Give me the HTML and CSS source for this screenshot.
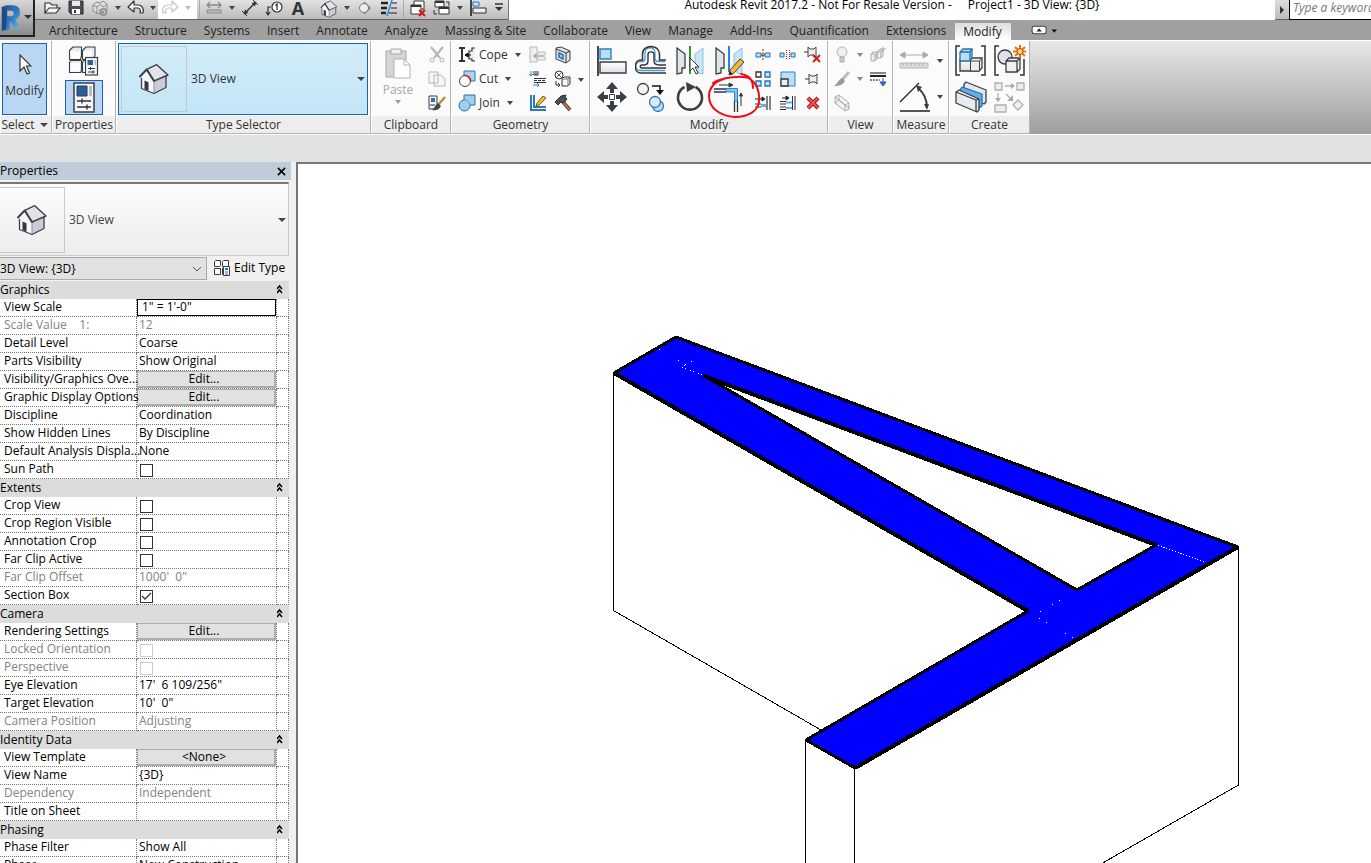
FILE: index.html
```html
<!DOCTYPE html>
<html lang="en">
<head>
    <meta charset="UTF-8">
    <meta name="viewport" content="width=device-width, initial-scale=1.0">
    <title>Autodesk Revit 2017.2 - Project1 - 3D View: {3D}</title>
    <link rel="stylesheet" href="styles.css">
</head>
<body>
    <!-- shared icons -->
    <svg class="defs" aria-hidden="true">
        <defs>
            <linearGradient id="rGrad" x1="0" y1="0" x2="1" y2="1">
                <stop offset="0" stop-color="#1d4f8f"/>
                <stop offset=".5" stop-color="#2f76bd"/>
                <stop offset="1" stop-color="#6cc0e8"/>
            </linearGradient>
            <linearGradient id="sheet" x1="0" y1="0" x2="0" y2="1">
                <stop offset="0" stop-color="#ffffff"/>
                <stop offset="1" stop-color="#dcdfe3"/>
            </linearGradient>
        </defs>
        <symbol id="house" viewBox="0 0 32 32">
            <path d="M3.500 13l5-6L16 18v12.500l-12.500-5z" fill="#f6f7f9"/>
            <path d="M16 18l12-6v12.500l-12 6z" fill="#c9ccd8"/>
            <path d="M3.500 15v10.500l12.500 5 12-6V13" fill="none" stroke="#3c4048" stroke-width="1.300" stroke-linejoin="round"/>
            <path d="M16 19v11" stroke="#8d919c"/>
            <path d="M8.700 6.300l10-4.600L30 12l-14 6z" fill="#e1e3e8" stroke="#3c4048" stroke-width="1.400" stroke-linejoin="round"/>
            <path d="M2 13.500l6.700-7L16 18" fill="none" stroke="#3c4048" stroke-width="2" stroke-linejoin="round" stroke-linecap="round"/>
            <path d="M6.500 17.500l4 1.800v8.500l-4-1.800z" fill="#34383e"/>
        </symbol>
        <symbol id="cubes" viewBox="0 0 32 32">
            <g fill="#e9ebee" stroke="#3a3e45" stroke-width="1.100" stroke-linejoin="round">
                <path d="M1.500 13.500v-9L5 1h8.500v9l-1 3.500zM14.500 13.500v-9L18 1h9v9l-3 3.500z"/>
                <path d="M1.500 26.500v-10l1-2h11v10l-1 2zM14.500 26.500v-10l1-2H27v12z"/>
            </g>
            <path d="M2.500 5h9.500v7.500H2.500zM15.500 5H24v7.500h-8.500zM2.500 17H12v8.500H2.500zM15.500 17H19v8.500h-3.500z" fill="#fdfdfd"/>
            <rect x="17.500" y="11.500" width="12" height="17.500" fill="#f5f6f7" stroke="#3a3e45" stroke-width="1.200"/>
            <path d="M19.500 14h5.500v5h-5.500z" fill="#2e6096"/>
            <path d="M26.500 14h1.500v5h-1.500z" fill="#b5b9be"/>
            <path d="M20 22.500h7M20 26h7M22.500 21v3M25 24.500v3" stroke="#3a3e45"/>
        </symbol>
    </svg>

    <header class="titlebar">
        <nav class="qat" aria-label="Quick Access">
            <button class="ico" aria-label="Open"><svg viewBox="0 0 18 18"><path d="M2 13V3h5l2 2h5v3M2 13l4-5h11l-4 5z" fill="#f6f6f6" stroke="#333" stroke-width="1.200"/></svg></button>
            <button class="ico" aria-label="Save"><svg viewBox="0 0 18 18"><path d="M2 1h14v13H4l-2-2z" fill="#4a4e55" stroke="#26292e"/><path d="M5 1h8v5H5z" fill="#e8eaec"/><path d="M5 9h8v5H5z" fill="#fff"/><path d="M7 10h2v3H7z" fill="#333"/></svg></button>
            <button class="ico" aria-label="Synchronize"><svg viewBox="0 0 18 18"><path d="M2 5l4-3 3 1 3-2 4 3v6l-4 3-4 1-6-3zM2 5l4 2v7M6 7l3-3M9 5l4 2 3-3M9 9v5" fill="#dcdcdc" stroke="#8b8b8b"/><circle cx="12.500" cy="12" r="4" fill="#969696"/><path d="M11 10l3 1-1 3" fill="none" stroke="#ccc"/></svg></button>
            <button class="drop" aria-label="Synchronize options"></button>
            <button class="ico" aria-label="Undo"><svg viewBox="0 0 18 18"><path d="M1 7l6-6v4h4c4 0 6 3 5 8h-3c1-3 0-5-2-5H7v4z" fill="#f4f4f4" stroke="#333" stroke-width="1.200" stroke-linejoin="round"/></svg></button>
            <button class="drop narrow" aria-label="Undo list"></button>
            <span class="qat-off">
                <button class="ico" aria-label="Redo" disabled><svg viewBox="0 0 18 18"><path d="M17 7l-6-6v4H7c-4 0-6 3-5 8h3c-1-3 0-5 2-5h4v4z" fill="#fff" stroke="#c6c6c6" stroke-width="1.200" stroke-linejoin="round"/></svg></button>
                <button class="drop" aria-label="Redo list" disabled></button>
            </span>
            <i class="sep"></i>
            <button class="ico" aria-label="Measure"><svg viewBox="0 0 18 18"><path d="M2 5h14M5 2L2 5l3 3M13 2l3 3-3 3" fill="none" stroke="#888" stroke-width="1.300"/><path d="M2 10h14v3H2z" fill="#bbb" stroke="#888"/></svg></button>
            <button class="drop" aria-label="Measure options"></button>
            <button class="ico" aria-label="Aligned Dimension"><svg viewBox="0 0 18 18"><path d="M4 13L14 3" stroke="#333" stroke-width="1.400"/><path d="M2.500 14.500l1.500-5 3.500 3.500zM15.500 1.500l-1.500 5L10.500 3z" fill="#333"/><path d="M1 11l5 5M12 0l5 5" stroke="#333"/></svg></button>
            <button class="ico" aria-label="Tag by Category"><svg viewBox="0 0 18 18"><path d="M6 7H3v7M1 12l2 3 2-3" fill="none" stroke="#333" stroke-width="1.200"/><circle cx="12" cy="7" r="5" fill="#fff" stroke="#333" stroke-width="1.200"/><path d="M10.500 5.500L12 4v6" fill="none" stroke="#333" stroke-width="1.300"/></svg></button>
            <button class="ico letter" aria-label="Text">A</button>
            <i class="space"></i>
            <button class="ico" aria-label="Default 3D View"><svg viewBox="0 0 32 32"><use href="#house"/></svg></button>
            <button class="drop" aria-label="3D view options"></button>
            <button class="ico" aria-label="Section"><svg viewBox="0 0 18 18"><path d="M8 1l7 7-7 7z" fill="#888"/><circle cx="8" cy="8" r="4.500" fill="#eee" stroke="#777"/></svg></button>
            <button class="ico" aria-label="Thin Lines"><svg viewBox="0 0 18 18"><path d="M1 3h7M1 8h6M1 13h5" stroke="#222" stroke-width="2.400"/><path d="M12 3h5M11 8h6M9 13h8" stroke="#222"/><path d="M12 0L7 16" stroke="#2f8be0" stroke-width="1.500"/></svg></button>
            <i class="sep"></i>
            <button class="ico" aria-label="Close Hidden Windows"><svg viewBox="0 0 18 18"><path d="M5 1h10v8H5z" fill="#fff" stroke="#333"/><path d="M2 5h10v9H2z" fill="#fff" stroke="#333"/><path d="M2 6h10" stroke="#333" stroke-width="2"/><path d="M10 10l6 6M16 10l-6 6" stroke="#d11717" stroke-width="2"/></svg></button>
            <button class="ico" aria-label="Switch Windows"><svg viewBox="0 0 18 18"><path d="M2 1h9v6H2zM6 7h10v7H6z" fill="#fff" stroke="#333"/><path d="M2 2h9M6 8h10" stroke="#333" stroke-width="2"/><path d="M13 2h3v4M1 10v4h3" fill="none" stroke="#333"/></svg></button>
            <button class="drop" aria-label="Switch Windows list"></button>
            <button class="ico" aria-label="Align"><svg viewBox="0 0 18 18"><path d="M2 0v16" stroke="#111" stroke-width="1.500"/><path d="M4 2h6v4H4z" fill="#cfe6f8" stroke="#2172b8"/><path d="M4 8h13v5H4z" fill="#eee" stroke="#333"/></svg></button>
            <button class="more" aria-label="Customize Quick Access Toolbar"><svg viewBox="0 0 10 10"><path d="M1 1h8" stroke="#333" stroke-width="1.500"/><path d="M1 4h8L5 8z" fill="#333"/></svg></button>
        </nav>
        <div class="caption">
            <span>Autodesk Revit 2017.2 - Not For Resale Version -</span>
            <span>Project1 - 3D View: {3D}</span>
        </div>
        <div class="search">
            <button class="search-toggle" aria-label="Toggle search"></button>
            <input type="text" aria-label="Search" placeholder="Type a keyword or phrase">
        </div>
        <button class="app-menu" aria-label="Application menu">
            <svg viewBox="0 0 24 32"><path d="M2 4l5-2h6c6 0 9 3 9 8 0 4-2 6-5 8l5 10h-6l-5-9v9l-4 2H2zM8 8v6h4c2 0 3-1 3-3s-1-3-3-3z" fill="url(#rGrad)" fill-rule="evenodd"/><path d="M2 4l5 3v21l-5 2z" fill="#1c4a86"/></svg>
        </button>
    </header>

    <nav class="tabs">
        <a href="#">Architecture</a>
        <a href="#">Structure</a>
        <a href="#">Systems</a>
        <a href="#">Insert</a>
        <a href="#">Annotate</a>
        <a href="#">Analyze</a>
        <a href="#">Massing &amp; Site</a>
        <a href="#">Collaborate</a>
        <a href="#">View</a>
        <a href="#">Manage</a>
        <a href="#">Add-Ins</a>
        <a href="#">Quantification</a>
        <a href="#">Extensions</a>
        <a href="#" class="active">Modify</a>
        <button class="minimize" aria-label="Minimize ribbon"><svg viewBox="0 0 24 10"><rect x="1" y="1" width="13" height="7" rx="2" fill="#fff" stroke="#3d4652"/><path d="M5 6l2.500-3L10 6z" fill="#222"/><path d="M19 4h5l-2.500 3z" fill="#111"/></svg></button>
    </nav>

    <section class="ribbon">
        <div class="panel p-select">
            <div class="panel-body">
                <button class="modify-btn">
                    <svg viewBox="0 0 14 22"><path d="M2 1v16l4-4 3 7 2.500-1-3-7h4.500z" fill="#fff" stroke="#333" stroke-width="1.200"/></svg>
                    Modify
                </button>
            </div>
            <button class="panel-title">Select <i class="caret"></i></button>
        </div>

        <div class="panel p-props">
            <div class="panel-body stack">
                <button class="props-btn" aria-label="Type Properties"><svg viewBox="0 0 32 32"><use href="#cubes"/></svg></button>
                <button class="props-btn on" aria-label="Properties palette"><svg viewBox="0 0 32 32"><path d="M6 1h20v29H6z" fill="#f4f5f6" stroke="#3a3e45" stroke-width="1.500"/><path d="M9 4h10v10H9z" fill="#2d5f96" stroke="#1d3f6b"/><path d="M21 4h3v10h-3z" fill="#b9bdc3"/><path d="M9 19h14M9 25h14M14 16.500v5M19 22.500v5" stroke="#333" stroke-width="1.400"/></svg></button>
            </div>
            <div class="panel-title">Properties</div>
        </div>

        <div class="panel p-type">
            <div class="panel-body">
                <button class="type-btn">
                    <span class="thumb"><svg viewBox="0 0 32 32"><use href="#house"/></svg></span>
                    <span class="grow">3D View</span>
                    <i class="caret"></i>
                </button>
            </div>
            <div class="panel-title">Type Selector</div>
        </div>

        <div class="panel p-clip">
            <div class="panel-body">
                <button class="paste" disabled>
                    <svg viewBox="0 0 28 32"><path d="M2 3h20v26H2z" fill="#d5d5d5" stroke="#a9a9a9"/><path d="M7 1h10v5H7z" fill="#eee" stroke="#a9a9a9"/><path d="M10 11h10l6 6v13H10z" fill="#fff" stroke="#b2b2b2"/><path d="M20 11v6h6" fill="none" stroke="#b2b2b2"/></svg>
                    Paste
                    <i class="caret"></i>
                </button>
                <div class="small-grid one">
                    <button aria-label="Cut to clipboard" disabled><svg viewBox="0 0 18 18"><path d="M3 1l9 11M15 1L6 12" stroke="#b5b5b5" stroke-width="2"/><circle cx="4" cy="14" r="2" fill="none" stroke="#b5b5b5"/><circle cx="14" cy="14" r="2" fill="none" stroke="#b5b5b5"/></svg></button>
                    <button aria-label="Copy to clipboard" disabled><svg viewBox="0 0 18 18"><path d="M1 2h9v11H1zM6 5h7l4 4v7H6z" fill="#f7f7f7" stroke="#b5b5b5"/></svg></button>
                    <button aria-label="Match type"><svg viewBox="0 0 18 18"><path d="M1 2h8v13H1z" fill="#f4f5f6" stroke="#3a3e45"/><path d="M3 4h4v4H3z" fill="#2d6fb3"/><path d="M2 11h5" stroke="#333"/><path d="M17 3l-7 8" stroke="#c08a2d" stroke-width="2.400"/><path d="M10 9l3 3c-2 4-5 5-9 4 3-2 3-5 6-7z" fill="#444"/></svg></button>
                </div>
            </div>
            <div class="panel-title">Clipboard</div>
        </div>

        <div class="panel p-geom">
            <div class="panel-body geom">
                <div class="labelled">
                    <button><svg viewBox="0 0 18 18"><path d="M1 2h6M1 15h6M4 2v13" stroke="#333" stroke-width="2"/><path d="M17 2h-3v3h-3v8h3v2h3" fill="#eef1f4" stroke="#333" stroke-width="1.200"/><path d="M7 9h6M7 9l3-2v4z" stroke="#111" fill="#111"/></svg>Cope <i class="caret"></i></button>
                    <button><svg viewBox="0 0 18 18"><path d="M6 1h11v10H6z" fill="#a9d3ee" stroke="#2a78b4"/><circle cx="7" cy="11" r="5.500" fill="#fff" stroke="#444"/><path d="M7 5.500a5.500 5.500 0 0 1 5.500 5.500" fill="none" stroke="#e11" stroke-width="1.500"/></svg>Cut <i class="caret"></i></button>
                    <button><svg viewBox="0 0 18 18"><path d="M6 1h11v10h-5a5.500 5.500 0 1 1-6-5z" fill="#a3cdeb" stroke="#2470ab"/><path d="M12 11a5.500 5.500 0 0 0-6-5" fill="none" stroke="#5e9cc9"/></svg>Join <i class="caret"></i></button>
                </div>
                <div class="small-grid two">
                    <button aria-label="Wall joins" disabled><svg viewBox="0 0 18 18"><path d="M1 1h7v5h8v8H8v2H1z" fill="#eee" stroke="#b8b8b8"/><path d="M15 10H6M9 7l-4 3 4 3" fill="none" stroke="#aaa" stroke-width="1.500"/></svg></button>
                    <button aria-label="Split face"><svg viewBox="0 0 18 18"><path d="M2 2l5-1 9 4v9l-4 3-10-4z" fill="#dfe3e8" stroke="#3a3e45"/><path d="M12 7v10M12 7l4-2M2 3l10 4" stroke="#3a3e45"/><path d="M5 7l4 2v4l-4-2z" fill="#b7dcf5" stroke="#2172b8" stroke-width="1.500"/></svg></button>
                    <button aria-label="Beam joins"><svg viewBox="0 0 18 18"><path d="M2 1v5M0 4l2 2 2-2M4 15h6M8 13l2 2-2 2" stroke="#2b83cf" fill="none"/><path d="M5 1v4h4V1M7 1v4" fill="none" stroke="#333"/><path d="M5 8.500h12M5 12.500h12" stroke="#333"/><path d="M5 10.500h12" stroke="#333" stroke-dasharray="3 1"/></svg></button>
                    <button aria-label="Demolish"><svg viewBox="0 0 18 18"><circle cx="5" cy="5" r="4" fill="#fff" stroke="#333"/><path d="M2 2l6 6M8 2L2 8" stroke="#555"/><path d="M2 11v4h4M4 13l2 2-2 2" fill="none" stroke="#333"/><path d="M8 9l2-2h6v7l-2 2H8z" fill="#fafafa" stroke="#333"/><path d="M8 9h6v7M14 9l2-2" fill="none" stroke="#777"/></svg></button>
                    <button aria-label="Paint"><svg viewBox="0 0 18 18"><path d="M2 1v15h15M5 1v12h12" fill="none" stroke="#2b78bd" stroke-width="2"/><path d="M7 12l1-3 6-7 3 2-7 7z" fill="#f1c232" stroke="#77561b"/></svg></button>
                    <button aria-label="Hammer"><svg viewBox="0 0 18 18"><path d="M1 8l6-6 5-1-1 2 2 2-4 5-2-2-3 3z" fill="#4b5058" stroke="#2c3036"/><path d="M9 8l7 8" stroke="#5e3a2a" stroke-width="3.500"/><path d="M10 9l6 7" stroke="#c08468" stroke-width="1.500"/></svg></button>
                </div>
                <button class="drop" aria-label="More geometry tools"></button>
            </div>
            <div class="panel-title">Geometry</div>
        </div>

        <div class="panel p-modify">
            <div class="panel-body">
                <div class="big-grid">
                    <button aria-label="Align"><svg viewBox="0 0 32 32"><path d="M2 1v30" stroke="#111" stroke-width="1.500"/><path d="M4 4h11v10H4z" fill="#b9def5" stroke="#2b83b8" stroke-width="1.400"/><path d="M4 17h26v11H4z" fill="url(#sheet)" stroke="#3a3e45" stroke-width="1.400"/></svg></button>
                    <button aria-label="Offset"><svg viewBox="0 0 32 32"><path d="M31 26.500H7c-7 0-7-9 0-9h1.500c2 0 2.500-1 2.500-3V9c0-7 10-7 10 0v5.500c0 2 1 3 3 3h7" fill="none" stroke="#4a9bd0" stroke-width="1.300" transform="translate(-1 -1)"/><path d="M31 23H7c-2.500 0-2.500-3 0-3h2c3 0 4-2 4-4.500V9.500c0-3.500 6-3.500 6 0v6c0 3 2 4.500 5 4.500h7" fill="none" stroke="#30353c" stroke-width="1.400"/><path d="M31 28H6c-7.500 0-7.500-13 0-13h1.500V9C7.500-1 24.500-1 24.500 9v6H31" fill="none" stroke="#30353c" stroke-width="1.500"/></svg></button>
                    <button aria-label="Mirror - Pick Axis"><svg viewBox="0 0 32 32"><path d="M3 3l8 6v14H8v5l-5 1z" fill="#e2e4e8" stroke="#3a3e45" stroke-width="1.300"/><path d="M29 3l-8 6v14h3v5l5 1z" fill="#c9e6f7" stroke="#8fbfdd"/><path d="M16 1v28" stroke="#2f9b2f" stroke-width="2"/><path d="M16 13v13l3-3 3 6 2-1-3-6h4z" fill="#fff" stroke="#333"/></svg></button>
                    <button aria-label="Mirror - Draw Axis"><svg viewBox="0 0 32 32"><path d="M3 3l8 6v14H8v5l-5 1z" fill="#e2e4e8" stroke="#3a3e45" stroke-width="1.300"/><path d="M29 3l-8 6v14h3v5l5 1z" fill="#c9e6f7" stroke="#8fbfdd"/><path d="M16 1v26" stroke="#2b83e0" stroke-width="2"/><path d="M16 30l1-5L27 14l4 3-11 12z" fill="#f4b94a" stroke="#5a3a1b"/><path d="M16 30l1-4 2.500 3z" fill="#222"/></svg></button>
                    <button aria-label="Move"><svg viewBox="0 0 32 32"><path d="M16 1l6 7h-4v4h-4V8h-4zM16 31l-6-7h4v-4h4v4h4zM1 16l7-6v4h4v4H8v4zM31 16l-7 6v-4h-4v-4h4v-4z" fill="#3a3e45"/><path d="M13.500 13.500h5v5h-5z" fill="#fff" stroke="#3a3e45"/></svg></button>
                    <button aria-label="Copy"><svg viewBox="0 0 32 32"><circle cx="8" cy="8" r="5.500" fill="#f4f4f4" stroke="#3a3e45" stroke-width="1.300"/><path d="M17 5h8v7" fill="none" stroke="#111" stroke-width="1.500"/><path d="M21 9l4 5 4-5z" fill="#111"/><circle cx="23" cy="25" r="5.500" fill="#b9def5" stroke="#2b78b4" stroke-width="1.300"/><circle cx="20" cy="21" r="5.500" fill="#d7ecfa" stroke="#2b78b4" stroke-width="1.300"/></svg></button>
                    <button aria-label="Rotate"><svg viewBox="0 0 32 32"><path d="M21.500 6a12 12 0 1 1-11 0" fill="none" stroke="#3a3e45" stroke-width="2.600"/><path d="M12 1l10 5-9 5z" fill="#3a3e45"/></svg></button>
                    <button aria-label="Trim/Extend to Corner"><svg viewBox="0 0 32 32"><path d="M6 4h12M16 2l4 2-4 2z" stroke="#30353c" fill="#30353c"/><path d="M1 8h12M1 11h12M21.500 20v11M24.500 20v11" stroke="#30353c" stroke-width="1.300"/><path d="M13 7.500h11.500V20h-3v-9H13z" fill="#7fc3f2" stroke="#2b83cf"/><path d="M28 25V13M26.500 15l1.500-3 1.500 3z" stroke="#30353c" fill="#30353c"/></svg></button>
                </div>
                <div class="small-grid three">
                    <button aria-label="Split Element"><svg viewBox="0 0 18 18"><path d="M2 7h5v4H2zM11 7h5v4h-5z" fill="#b9def5" stroke="#2470ab"/><path d="M9 3v12" stroke="#c11" stroke-dasharray="2 1"/><path d="M7 9h4" stroke="#333"/></svg></button>
                    <button aria-label="Split with Gap"><svg viewBox="0 0 18 18"><path d="M1 7h4v4H1zM12 7h4v4h-4z" fill="#b9def5" stroke="#2470ab"/><path d="M7.500 4v10M10.500 4v10" stroke="#c11" stroke-dasharray="1 1"/></svg></button>
                    <button aria-label="Unpin"><svg viewBox="0 0 18 18"><path d="M0 6h4" stroke="#333"/><path d="M4 1v10l2-2h4l2 2V1l-2 2H6z" fill="#eee" stroke="#444"/><path d="M9 9l7 7M16 9l-7 7" stroke="#d11c1c" stroke-width="2"/></svg></button>
                    <button aria-label="Array"><svg viewBox="0 0 18 18"><path d="M2 2h5v5H2z" fill="#fff" stroke="#333" stroke-width="1.300"/><path d="M11 2h5v5h-5zM2 11h5v5H2zM11 11h5v5h-5z" fill="#c9e6f7" stroke="#2172b8" stroke-width="1.300"/></svg></button>
                    <button aria-label="Scale"><svg viewBox="0 0 18 18"><path d="M2 2h14v14H2z" fill="#b9def5" stroke="#2b83b8"/><path d="M2 9h7v7H2z" fill="#eee" stroke="#333" stroke-width="1.300"/></svg></button>
                    <button aria-label="Pin"><svg viewBox="0 0 18 18"><path d="M1 9h4" stroke="#333"/><path d="M5 4v10l2-2h4l2 2V4l-2 2H7z" fill="#eee" stroke="#444"/></svg></button>
                    <button aria-label="Trim/Extend Single"><svg viewBox="0 0 18 18"><path d="M1 5h9M8 3l3 2-3 2z" stroke="#222" fill="#222"/><path d="M1 10h6M1 13h6M13 2v14M16 2v14" stroke="#333" stroke-width="1.200"/><path d="M7 10h5v3H7z" fill="#5db1ef"/></svg></button>
                    <button aria-label="Trim/Extend Multiple"><svg viewBox="0 0 18 18"><path d="M3 4h5M7 2l3 2-3 2z" stroke="#222" fill="#222"/><path d="M1 7.500h6M1 10h6M1 13h6M1 15.500h6M13.500 2v14M16 2v14" stroke="#333"/><path d="M7 8.500h6M7 14h6" stroke="#5db1ef" stroke-width="2"/></svg></button>
                    <button aria-label="Delete"><svg viewBox="0 0 18 18"><path d="M4 4l10 10M14 4L4 14" stroke="#8f1616" stroke-width="4"/><path d="M4 4l10 10M14 4L4 14" stroke="#ee5050" stroke-width="2.400"/></svg></button>
                </div>
                <svg class="markup" viewBox="0 0 56 46" aria-hidden="true"><path d="M33 1c7 1 12 5 12 14M5 10C14 4 36 2 42 6c7 4 10 14 9 23-1 9-11 15-24 15C13 43 1 36 1 23 1 15 7 8 16 6" fill="none" stroke="#f00a12" stroke-width="2" stroke-linecap="round"/></svg>
            </div>
            <div class="panel-title">Modify</div>
        </div>

        <div class="panel p-view">
            <div class="panel-body">
                <div class="view-grid">
                    <button aria-label="Hide" disabled><svg viewBox="0 0 18 18"><circle cx="9" cy="6" r="5" fill="#eee" stroke="#b5b5b5"/><path d="M7 11h4v5H7z" fill="#ccc" stroke="#aaa"/></svg></button>
                    <button class="drop" aria-label="Hide options"></button>
                    <button aria-label="Displace Elements" disabled><svg viewBox="0 0 18 18"><path d="M2 8l2-2h4v7l-2 2H2zM2 8h4v7M8 6l2-2h4v6l-2 2H8zM8 6h4v6M12 6l2-2" fill="#eee" stroke="#aaa"/><path d="M14 1v5M11 3h6" stroke="#aaa"/></svg></button>
                    <button aria-label="Override Graphics" disabled><svg viewBox="0 0 18 18"><path d="M16 2l-7 8" stroke="#bbb" stroke-width="3"/><path d="M9 8l3 3c-2 4-6 5-11 5 4-3 4-6 8-8z" fill="#999"/></svg></button>
                    <button class="drop" aria-label="Override options"></button>
                    <button aria-label="Linework"><svg viewBox="0 0 18 18"><path d="M1 3h16" stroke="#111"/><path d="M1 6h16" stroke="#222" stroke-width="2"/><path d="M1 10h10" stroke="#111" stroke-dasharray="2 1"/><path d="M14 8v5M11 12h6l-3 4z" fill="#2176d2" stroke="#1d5ca8"/></svg></button>
                    <button aria-label="Selection Box" disabled><svg viewBox="0 0 18 18"><path d="M2 3l4-2 10 8v6l-4 2L2 9zM2 3l10 8 4-2M12 11v6M6 1v5l10 8M2 9l4-3" fill="#f2f2f2" stroke="#aaa"/></svg></button>
                </div>
            </div>
            <div class="panel-title">View</div>
        </div>

        <div class="panel p-measure">
            <div class="panel-body">
                <div class="measure-grid">
                    <button aria-label="Measure" disabled><svg viewBox="0 0 32 32"><path d="M4 10h24M7 7l-5 3 5 3zM25 7l5 3-5 3z" stroke="#aaa" fill="#aaa"/><path d="M2 18h28v5H2z" fill="#ddd" stroke="#b5b5b5"/><path d="M5 18v3M9 18v3M13 18v3M17 18v3M21 18v3M25 18v3" stroke="#aaa"/></svg></button>
                    <button class="drop" aria-label="Measure options"></button>
                    <button aria-label="Dimension"><svg viewBox="0 0 32 32"><path d="M2 21L21 2M2 30h30" stroke="#222" stroke-width="1.300"/><path d="M20 7c6 5 9 12 9 20" fill="none" stroke="#3a3e45" stroke-width="2"/><path d="M18 4l6 2-4 5zM26 23h5l-2 6z" fill="#3a3e45"/></svg></button>
                    <button class="drop" aria-label="Dimension options"></button>
                </div>
            </div>
            <div class="panel-title">Measure</div>
        </div>

        <div class="panel p-create">
            <div class="panel-body">
                <div class="create-grid">
                    <button aria-label="Create Group"><svg viewBox="0 0 32 32"><path d="M5 1H1v29h4M26 1h4v29h-4" fill="none" stroke="#333" stroke-width="1.500"/><path d="M5 15h10l2-2h10v10l-3 3H5z" fill="url(#sheet)" stroke="#3a3e45" stroke-width="1.300"/><path d="M15.500 16h9v10h-9zM24.500 16l2.500-3" fill="#eee" stroke="#3a3e45"/><path d="M5 7l3-3h9v9l-2 3H5zM5 7h10v9M15 7l2-3" fill="#b9def5" stroke="#2172a8" stroke-width="1.300"/></svg></button>
                    <button aria-label="Create Similar"><svg viewBox="0 0 32 32"><path d="M5 1H1v29h4M26 30h4V14" fill="none" stroke="#333" stroke-width="1.500"/><circle cx="11" cy="12" r="7" fill="#dfe1e5" stroke="#3a3e45" stroke-width="1.300"/><path d="M12 16l3-3h11v11l-3 3H12zM12 16h11v11M23 16l3-3" fill="#f0f1f3" stroke="#3a3e45" stroke-width="1.300"/><path d="M26 0v13M19 6.500h13M21 2l10 9M31 2l-10 9" stroke="#e07818" stroke-width="2"/><circle cx="26" cy="6.500" r="3" fill="#ffe14d" stroke="#d42e1c"/></svg></button>
                    <button aria-label="Create Assembly"><svg viewBox="0 0 32 32"><g stroke="#3a3e45" stroke-width="1.300" stroke-linejoin="round"><path d="M9 3l2-2 20 8v12l-2 2L9 14z" fill="#e5e7eb"/><path d="M5 9l2-3 20 7v12l-3 2L5 19z" fill="#5db1ef" stroke="#2172a8"/><path d="M1 11l3-2 20 9v11l-2 2L1 22z" fill="#e8eaed"/><path d="M1 11l20 8v12M21 19l3-1" fill="none"/></g></svg></button>
                    <button aria-label="Create Parts" disabled><svg viewBox="0 0 32 32"><g fill="#eee" stroke="#b0b0b0" stroke-width="1.300"><path d="M1 2h7v7H1zM23 2h7v7h-7zM1 24h11v7H1zM24 19l5 5-5 5-5-5z"/><path d="M11 5h8M4 12v7M12 13l5 5" fill="none"/></g><path d="M17 2l4 3-4 3zM1 17h6l-3 4zM19 14v6h-6z" fill="#aaa"/></svg></button>
                </div>
            </div>
            <div class="panel-title">Create</div>
        </div>
    </section>

    <div class="options-bar"></div>

    <main class="workspace">
        <aside class="palette">
            <div class="palette-head">
                <h2>Properties</h2>
                <button aria-label="Close"><svg viewBox="0 0 10 10"><path d="M1 1l8 8M9 1L1 9" stroke="#000" stroke-width="1.800"/></svg></button>
            </div>
            <button class="type-card">
                <span class="thumb"><svg viewBox="0 0 32 32"><use href="#house"/></svg></span>
                <span class="grow">3D View</span>
                <i class="caret"></i>
            </button>
            <div class="filter">
                <select aria-label="Element filter"><option>3D View: {3D}</option></select>
                <button class="edit-type"><svg viewBox="0 0 18 18"><g fill="#fff" stroke="#3a3e45"><path d="M1.500 7.500v-5l1-1h5v5l-1 1zM9.500 7.500v-5l1-1h5v6zM1.500 15.500v-6h6v6zM9.500 15.500v-6h5v6z"/><path d="M10.500 7.500h6v9h-6z"/></g><path d="M12 9h3v2h-3z" fill="#2570c0"/><path d="M12 13h3M12 15h3" stroke="#2570c0"/></svg>Edit Type</button>
            </div>

            <table class="props">
                <colgroup><col class="c-name"><col><col class="c-end"></colgroup>
                <tbody>
                    <tr class="group"><th colspan="2">Graphics</th><td><button class="fold" aria-label="Collapse Graphics"></button></td></tr>
                    <tr><th><label for="scale">View Scale</label></th><td class="field"><input type="text" id="scale" class="scale" value="1&quot; = 1'-0&quot;"></td><td></td></tr>
                    <tr class="off"><th>Scale Value &nbsp;&nbsp; 1:</th><td>12</td><td></td></tr>
                    <tr><th>Detail Level</th><td>Coarse</td><td></td></tr>
                    <tr><th>Parts Visibility</th><td>Show Original</td><td></td></tr>
                    <tr><th>Visibility/Graphics Ove...</th><td class="field"><button class="edit">Edit...</button></td><td></td></tr>
                    <tr><th>Graphic Display Options</th><td class="field"><button class="edit">Edit...</button></td><td></td></tr>
                    <tr><th>Discipline</th><td>Coordination</td><td></td></tr>
                    <tr><th>Show Hidden Lines</th><td>By Discipline</td><td></td></tr>
                    <tr><th>Default Analysis Displa...</th><td>None</td><td></td></tr>
                    <tr><th><label for="sun">Sun Path</label></th><td><input type="checkbox" id="sun"></td><td></td></tr>
                </tbody>
                <tbody>
                    <tr class="group"><th colspan="2">Extents</th><td><button class="fold" aria-label="Collapse Extents"></button></td></tr>
                    <tr><th><label for="crop">Crop View</label></th><td><input type="checkbox" id="crop"></td><td></td></tr>
                    <tr><th><label for="region">Crop Region Visible</label></th><td><input type="checkbox" id="region"></td><td></td></tr>
                    <tr><th><label for="anno">Annotation Crop</label></th><td><input type="checkbox" id="anno"></td><td></td></tr>
                    <tr><th><label for="farclip">Far Clip Active</label></th><td><input type="checkbox" id="farclip"></td><td></td></tr>
                    <tr class="off"><th>Far Clip Offset</th><td>1000' &nbsp;0"</td><td></td></tr>
                    <tr><th><label for="section">Section Box</label></th><td><input type="checkbox" id="section" checked></td><td></td></tr>
                </tbody>
                <tbody>
                    <tr class="group"><th colspan="2">Camera</th><td><button class="fold" aria-label="Collapse Camera"></button></td></tr>
                    <tr><th>Rendering Settings</th><td class="field"><button class="edit">Edit...</button></td><td></td></tr>
                    <tr class="off"><th><label for="locked">Locked Orientation</label></th><td><input type="checkbox" id="locked" disabled></td><td></td></tr>
                    <tr class="off"><th><label for="persp">Perspective</label></th><td><input type="checkbox" id="persp" disabled></td><td></td></tr>
                    <tr><th>Eye Elevation</th><td>17' &nbsp;6 109/256"</td><td></td></tr>
                    <tr><th>Target Elevation</th><td>10' &nbsp;0"</td><td></td></tr>
                    <tr class="off"><th>Camera Position</th><td>Adjusting</td><td></td></tr>
                </tbody>
                <tbody>
                    <tr class="group"><th colspan="2">Identity Data</th><td><button class="fold" aria-label="Collapse Identity Data"></button></td></tr>
                    <tr><th>View Template</th><td class="field"><button class="edit">&lt;None&gt;</button></td><td></td></tr>
                    <tr><th>View Name</th><td>{3D}</td><td></td></tr>
                    <tr class="off"><th>Dependency</th><td>Independent</td><td></td></tr>
                    <tr><th>Title on Sheet</th><td></td><td></td></tr>
                </tbody>
                <tbody>
                    <tr class="group"><th colspan="2">Phasing</th><td><button class="fold" aria-label="Collapse Phasing"></button></td></tr>
                    <tr><th>Phase Filter</th><td>Show All</td><td></td></tr>
                    <tr><th>Phase</th><td>New Construction</td><td></td></tr>
                </tbody>
            </table>
        </aside>

        <div class="viewport">
            <svg viewBox="298 164 1073 699" preserveAspectRatio="xMinYMin meet" role="img" aria-label="3D view of joined walls">
                <g stroke="#000" fill="none" shape-rendering="crispEdges">
                    <path d="M613.500 373V610.500L821 730M805.500 740V900M854.500 768V900M1238.500 547V785L1040 899"/>
                </g>
                <path d="M676 337L1238 547 855 768 806 740 1028 611 614 373zM704 376L1077 590 1156 545z" fill="#00f" fill-rule="evenodd" stroke="#000" stroke-width="3" stroke-linejoin="round" shape-rendering="crispEdges"/>
                <path d="M614 373L1028 611M704 376L1156 545M855 768L1238 547" stroke="#000" stroke-width="4" shape-rendering="crispEdges"/>
                <path d="M1158 545L1205 562" stroke="#fff" stroke-dasharray="1 2" shape-rendering="crispEdges"/>
                <path d="M659 349h1M678 360h1M691 361h1M685 364h1M684 365h1M682 367h1M685 368h1M690 370h1M693 371h1M698 373h1M701 374h1M1059 600h1M1052 604h1M1040 611h1M1039 618h1M1046 622h1M1065 633h1M1072 637h1" stroke="#fff" shape-rendering="crispEdges"/>
            </svg>
        </div>
    </main>
</body>
</html>
```
FILE: styles.css
```css
:root {
    --line: #b4b4b4;
    --accent: #1565c0;
    --text: #333333;
    --tab-bg: #a0a0a0;
}

* {
    box-sizing: border-box;
    margin: 0;
    padding: 0;
}

body {
    height: 100vh;
    overflow: hidden;
    display: flex;
    flex-direction: column;
    background: #fff;
    color: #000;
    font-family: "Open Sans", "Noto Sans", sans-serif;
    font-size: 12px;
    line-height: 16px;
}

button, input, select {
    font: inherit;
    color: inherit;
    border: none;
    background: none;
}

svg {
    display: block;
}

.defs {
    position: absolute;
    width: 0;
    height: 0;
}

.caret,
.drop::after {
    content: "";
    display: inline-block;
    border: 3px solid transparent;
    border-top: 4px solid #444;
    border-bottom: none;
}

.drop {
    width: 12px;
    display: flex;
    align-items: center;
    justify-content: center;
}

.grow {
    flex: 1;
    text-align: left;
}

/* title bar */
.titlebar {
    position: relative;
    height: 20px;
    flex: none;
    display: flex;
    padding-left: 35px;
}

.qat {
    display: flex;
    width: 474px;
    padding-left: 5px;
    background: linear-gradient(#e2e2e2, #bcbcbc);
    border-right: 1px solid #777;
    border-bottom: 1px solid #666;
}

.qat .ico {
    width: 24px;
    display: flex;
    justify-content: center;
}

.qat .ico svg {
    width: 18px;
    height: 18px;
}

.qat .drop {
    height: 16px;
}

.qat .narrow {
    width: 10px;
}

.qat .letter {
    font-size: 18px;
    font-weight: 700;
    line-height: 17px;
    color: #333;
}

.qat-off {
    display: flex;
    width: 39px;
    background: #fff;
}

.qat-off .drop::after {
    border-top-color: #bbb;
}

.sep {
    width: 1px;
    margin: 0 2px;
    background: #aaa;
}

.space {
    width: 7px;
}

.more {
    display: flex;
    flex: 1;
    justify-content: center;
    padding-top: 3px;
}

.more svg {
    width: 10px;
    height: 10px;
}

.caption {
    flex: 1;
    display: flex;
    justify-content: center;
    gap: 16px;
    line-height: 9px;
    white-space: nowrap;
}

.search {
    display: flex;
    width: 96px;
}

.search-toggle {
    width: 14px;
    display: flex;
    align-items: center;
    justify-content: center;
    background: linear-gradient(#ddd, #bbb);
    border-bottom: 1px solid #666;
}

.search-toggle::after {
    content: "";
    border: 4px solid transparent;
    border-left: 4px solid #333;
    border-right: none;
}

.search input {
    flex: 1;
    min-width: 0;
    padding: 0 0 4px 3px;
    border-left: 1px solid #000;
    border-bottom: 1px solid #000;
    background: #fff;
}

.search input::placeholder {
    color: #777;
    font-style: italic;
}

.app-menu {
    position: absolute;
    left: 0;
    top: 0;
    width: 35px;
    height: 37px;
    background: linear-gradient(#d8d8d8, #8a8a8a);
    border-right: 2px solid #222;
    border-bottom: 2px solid #222;
    z-index: 2;
}

.app-menu svg {
    width: 22px;
    height: 30px;
}

.app-menu::after {
    content: "";
    position: absolute;
    right: 1px;
    top: 15px;
    border: 4px solid transparent;
    border-top-color: #333;
    border-bottom: none;
}

/* ribbon tabs */
.tabs {
    height: 20px;
    flex: none;
    display: flex;
    justify-content: flex-start;
    padding-left: 41px;
    background: var(--tab-bg);
}

.tabs a {
    padding: 0 9px 0 8px;
    line-height: 22px;
    color: #222;
    text-decoration: none;
    white-space: nowrap;
}

.tabs .active {
    margin: 3px 0 0;
    line-height: 17px;
    background: linear-gradient(#dcdcdc, #fff);
}

.minimize {
    margin-left: 20px;
}

.minimize svg {
    width: 26px;
    height: 11px;
}

/* ribbon */
.ribbon {
    flex: none;
    display: flex;
    height: 95px;
    border-top: 1px solid #fff;
    border-bottom: 1px solid #fff;
    background: linear-gradient(#e8e8e8, #9e9e9e);
    color: var(--text);
}

.panel {
    display: flex;
    flex-direction: column;
    background: #fbfbfb;
    border-right: 1px solid var(--line);
    border-left: 1px solid #fff;
    border-bottom: 1px solid var(--line);
}

.panel-body {
    position: relative;
    flex: 1;
    display: flex;
    padding-top: 2px;
}

.panel-body button {
    display: flex;
    align-items: center;
    justify-content: center;
}

.panel-title {
    height: 17px;
    line-height: 18px;
    text-align: center;
    background: #ededed;
    white-space: nowrap;
}

.p-select { width: 52px; }
.p-props { width: 64px; }
.p-type { width: 255px; }
.p-clip { width: 80px; }
.p-geom { width: 139px; }
.p-modify { width: 238px; }
.p-view { width: 65px; }
.p-measure { width: 56px; }
.p-create { width: 81px; }

.p-select .panel-title {
    padding-right: 3px;
}

.p-select .caret {
    margin: 0 0 2px 2px;
    border-width: 4px 4px 0;
}

.panel-body .modify-btn {
    flex-direction: column;
    gap: 7px;
    width: 45px;
    height: 72px;
    padding-bottom: 6px;
    margin-left: 1px;
    background: #b9d7f3;
    border: 1px solid var(--accent);
}

.modify-btn svg {
    width: 14px;
    height: 22px;
}

.stack {
    flex-direction: column;
    align-items: center;
}

.props-btn {
    width: 38px;
    height: 37px;
}

.props-btn.on {
    height: 35px;
    background: #b9d7f3;
    border: 1px solid var(--accent);
}

.props-btn svg {
    width: 32px;
    height: 32px;
}

.type-btn {
    flex: 1;
    height: 72px;
    margin: 0 2px 0 1px;
    padding: 2px;
    background: linear-gradient(#d3ecf9, #c3e6f7);
    border: 1px solid var(--accent);
}

.thumb {
    display: flex;
    align-items: center;
    justify-content: center;
    width: 66px;
    height: 66px;
    margin-right: 4px;
    border: 1px solid #c8c8c8;
}

.thumb svg {
    width: 32px;
    height: 32px;
}

.type-btn .caret,
.type-card .caret {
    border-width: 4px 4px 0;
}

.panel-body .paste {
    flex-direction: column;
    width: 52px;
    padding-bottom: 8px;
    gap: 2px;
    color: #a8a8a8;
}

.paste svg {
    width: 28px;
    height: 32px;
}

.paste .caret {
    border-top-color: #999;
}

.small-grid {
    display: grid;
    grid-auto-rows: 24px;
}

.small-grid svg,
.labelled svg,
.view-grid svg {
    width: 18px;
    height: 18px;
}

.small-grid.one { grid-template-columns: 25px; }
.small-grid.two { grid-template-columns: repeat(2, 25px); }
.small-grid.three { grid-template-columns: repeat(3, 25px); }

.geom {
    padding-left: 6px;
}

.labelled {
    width: 67px;
    display: grid;
    grid-auto-rows: 24px;
}

.labelled button {
    justify-content: flex-start;
    gap: 3px;
}

.labelled .caret {
    margin-left: 4px;
}

.big-grid {
    display: grid;
    grid-template-columns: repeat(4, 39px);
    grid-auto-rows: 36px;
    margin: 0 2px 0 1px;
}

.big-grid svg,
.measure-grid svg,
.create-grid svg {
    width: 32px;
    height: 32px;
}

.markup {
    position: absolute;
    left: 117px;
    top: 32px;
    width: 56px;
    height: 46px;
}

.view-grid {
    display: grid;
    grid-template-columns: 26px 9px 27px;
    grid-auto-rows: 24px;
}

.view-grid .drop::after {
    border-top-color: #888;
}

.view-grid .drop {
    width: auto;
}

.measure-grid {
    display: grid;
    grid-template-columns: 40px 12px;
    grid-auto-rows: 36px;
}

.create-grid {
    display: grid;
    grid-template-columns: repeat(2, 39px);
    grid-auto-rows: 36px;
    padding-left: 1px;
}

.options-bar {
    flex: none;
    height: 27px;
    background: #e0e1e3;
}

/* workspace */
.workspace {
    flex: 1;
    min-height: 0;
    display: flex;
    background: #f0f0f0;
}

.palette {
    width: 291px;
    margin-right: 5px;
    overflow: hidden;
}

.palette-head {
    display: flex;
    justify-content: space-between;
    align-items: center;
    height: 18px;
    margin-bottom: 2px;
    padding-right: 5px;
    background: #bfcddb;
}

.palette-head h2 {
    font-size: 12px;
    font-weight: 400;
    line-height: 18px;
}

.palette-head svg {
    width: 9px;
    height: 9px;
}

.type-card {
    display: flex;
    align-items: center;
    width: 289px;
    height: 74px;
    padding-right: 2px;
    border-top: 2px solid #777;
    border-right: 1px solid #ccc;
    border-bottom: 1px solid #ccc;
    background: linear-gradient(#fdfdfd, #ececec);
    color: #444;
}

.type-card .thumb {
    width: 65px;
    border-left: none;
}

.filter {
    display: flex;
    align-items: center;
    height: 25px;
    gap: 6px;
}

.filter select {
    width: 207px;
    height: 23px;
    appearance: none;
    border: 1px solid #aaa;
    border-left: none;
    background: #e1e1e1 url("data:image/svg+xml,%3Csvg xmlns='http://www.w3.org/2000/svg' width='10' height='6'%3E%3Cpath d='M1 1l4 4 4-4' fill='none' stroke='%23555'/%3E%3C/svg%3E") no-repeat right 4px center;
}

.edit-type {
    display: flex;
    align-items: center;
    gap: 3px;
    padding-bottom: 2px;
    white-space: nowrap;
}

.edit-type svg {
    width: 18px;
    height: 18px;
}

/* property grid */
.props {
    width: 289px;
    table-layout: fixed;
    border-collapse: separate;
    border-spacing: 0;
    background: #fff;
}

.c-name { width: 137px; }
.c-end { width: 12px; }

.props tr {
    height: 18px;
}

.props th,
.props td {
    height: 18px;
    padding: 0 0 0 2px;
    font-weight: 400;
    text-align: left;
    vertical-align: top;
    line-height: 15px;
    white-space: nowrap;
    border-right: 1px dotted #777;
    border-bottom: 1px dotted #777;
}

.props th {
    padding: 0 0 0 4px;
}

.props .field {
    padding: 0;
}

.props .off {
    color: #838383;
}

.props .group th,
.props .group td {
    padding: 0;
    border: none;
    line-height: 18px;
    background: #dcdcdc;
}

.fold {
    display: block;
    width: 8px;
    height: 13px;
    background: url("data:image/svg+xml,%3Csvg xmlns='http://www.w3.org/2000/svg' width='8' height='10'%3E%3Cpath d='M0 5l2.500-3L5 5M0 9l2.500-3L5 9' fill='none' stroke='black' stroke-width='1.500'/%3E%3C/svg%3E") no-repeat 0 3px;
}

.scale {
    display: block;
    width: 100%;
    height: 17px;
    padding: 0 0 2px 4px;
    border: 1px solid #000;
}

.edit {
    display: block;
    width: 100%;
    height: 17px;
    padding-right: 4px;
    line-height: 14px;
    background: #e1e1e1;
    border: 1px solid #adadad;
    border-right-width: 2px;
    border-bottom-width: 2px;
}

.props input[type="checkbox"] {
    display: block;
    appearance: none;
    width: 13px;
    height: 13px;
    margin: 3px 0 0 1px;
    border: 1px solid #333;
    background: #fff;
}

.props input[type="checkbox"]:checked {
    background: url("data:image/svg+xml,%3Csvg xmlns='http://www.w3.org/2000/svg' width='11' height='11'%3E%3Cpath d='M1 5l3 3 6-6' fill='none' stroke='%23333' stroke-width='1.300'/%3E%3C/svg%3E");
}

.props input[type="checkbox"]:disabled {
    border-color: #ccc;
}

/* drawing area */
.viewport {
    flex: 1;
    min-width: 0;
    background: #fff;
    border-top: 2px solid #777;
    border-left: 2px solid #777;
}

.viewport svg {
    width: 100%;
    height: 100%;
}
```
